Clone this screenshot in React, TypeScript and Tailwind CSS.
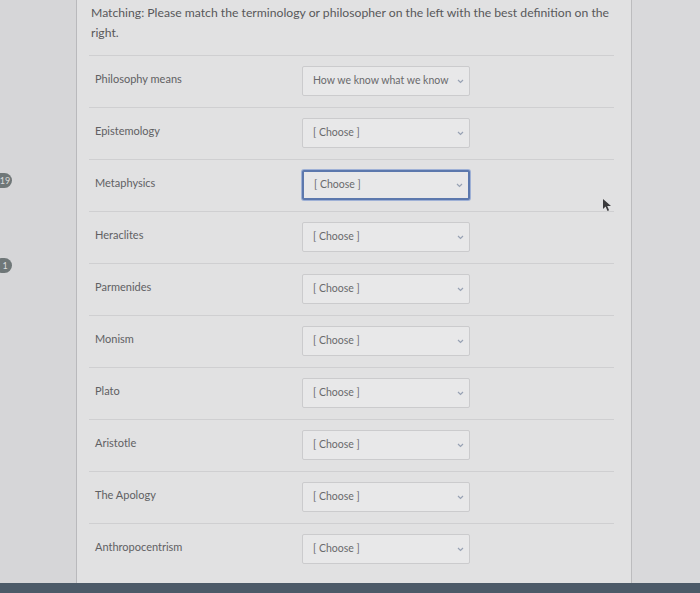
import React from 'react';

const rows = [
  { term: 'Philosophy means', value: 'How we know what we know' },
  { term: 'Epistemology', value: '[ Choose ]' },
  { term: 'Metaphysics', value: '[ Choose ]', focused: true },
  { term: 'Heraclites', value: '[ Choose ]' },
  { term: 'Parmenides', value: '[ Choose ]' },
  { term: 'Monism', value: '[ Choose ]' },
  { term: 'Plato', value: '[ Choose ]' },
  { term: 'Aristotle', value: '[ Choose ]' },
  { term: 'The Apology', value: '[ Choose ]' },
  { term: 'Anthropocentrism', value: '[ Choose ]' },
];

const Chevron = () => (
  <svg width="7" height="5" viewBox="0 0 7 5" className="shrink-0">
    <path d="M1 1l2.5 2.5L6 1" fill="none" stroke="#98a2b4" strokeWidth="1.2" />
  </svg>
);

export default function App() {
  return (
    <div className="flex h-[593px] w-[700px] flex-col overflow-hidden bg-[#d6d6d8] font-['Lato','Liberation_Sans',sans-serif] text-[#5b5b5d]">
      <div className="flex flex-1">
        {/* gutter with badges */}
        <div className="relative w-[77px] shrink-0 border-r border-[#b9b9bc] bg-[#d6d6d8]">
          <span className="absolute left-[-8px] top-[173px] flex h-[15px] w-[20px] items-center justify-center rounded-full bg-[#6f7778] pl-[6px] text-[9px] text-[#dcdcdc]">
            19
          </span>
          <span className="absolute left-[-6px] top-[258px] flex h-[15px] w-[18px] items-center justify-center rounded-full bg-[#6f7778] pl-[4px] text-[9px] text-[#dcdcdc]">
            1
          </span>
        </div>

        {/* question panel */}
        <div className="relative w-[555px] shrink-0 border-r border-[#bcbcbe] bg-[#e1e1e2]">
          <p className="pl-[14px] pr-[10px] pt-[3px] text-[12.2px] leading-[20px] text-[#58585a]">
            Matching: Please match the terminology or philosopher on the left with the best definition on the right.
          </p>

          <div className="ml-[12px] mr-[17px] mt-[12px]">
            {rows.map((r) => (
              <div key={r.term} className="flex h-[52px] items-start border-t border-[#cfcfd1]">
                <div className="w-[213px] pl-[6px] pt-[16px] text-[11px] leading-[14px] text-[#606062]">{r.term}</div>
                <div
                  className={`mt-[10px] flex h-[30px] w-[168px] items-center justify-between rounded-[2px] border bg-[#e8e8e9] pl-[10px] pr-[5px] text-[10.5px] ${
                    r.focused ? 'border-[#5c78ad] border-2 shadow-[0_0_0_1px_#9fb1d6]' : 'border-[#cbcbcd]'
                  }`}
                >
                  <span className="text-[#6a6a6c]">{r.value}</span>
                  <Chevron />
                </div>
              </div>
            ))}
          </div>

          {/* mouse cursor */}
          <svg width="10" height="14" viewBox="0 0 10 14" className="absolute left-[525px] top-[198px]">
            <path d="M1 1v10l2.6-2.4L5.5 13l1.6-.7-1.9-4.2H9z" fill="#3a3a3c" />
          </svg>
        </div>

        <div className="flex-1 bg-[#d9d9db]" />
      </div>
      <div className="h-[10px] shrink-0 bg-[#4c5a68]" />
    </div>
  );
}
